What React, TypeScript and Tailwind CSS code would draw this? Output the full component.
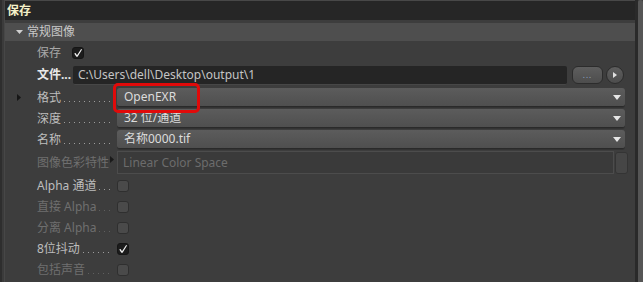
import React from 'react';

const font = { fontFamily: '"Noto Sans", "Noto Sans CJK SC", sans-serif' };

const DownArrow = () => (
  <svg width="8" height="5" viewBox="0 0 8 5" className="shrink-0">
    <path d="M0 0 H8 L4 5 Z" fill="#e6e6e6" />
  </svg>
);

const Checkbox = ({ checked }: { checked?: boolean }) => (
  <div
    className={
      'w-[12px] h-[12px] rounded-[3px] flex items-center justify-center shrink-0 ' +
      (checked
        ? 'bg-[#1c1c1c] border border-[#151515]'
        : 'bg-[#4a4a4a] border border-[#2f2f2f]')
    }
  >
    {checked && (
      <svg width="10" height="10" viewBox="0 0 10 10">
        <path d="M1.2 5.6 L3.4 8.8 L4.6 8.8 L9.2 1.2 L8 1.2 L4 7.2 L2.6 5 Z" fill="#f2f2f2" />
      </svg>
    )}
  </div>
);

const Label = ({ text, dim }: { text: string; dim?: boolean }) => (
  <div className="w-[75px] mr-[5px] flex items-center whitespace-nowrap">
    <span className={'text-[12px] leading-none ' + (dim ? 'text-[#6f6f6f]' : 'text-[#bdbdbd]')}>{text}</span>
    <div
      className={
        'flex-1 ml-[3px] mt-[8px] h-[1px] bg-repeat-x bg-[length:5px_1px] ' +
        (dim
          ? 'bg-[linear-gradient(to_right,#5f5f5f_1px,transparent_1px)]'
          : 'bg-[linear-gradient(to_right,#9c9c9c_1px,transparent_1px)]')
      }
    />
  </div>
);

const Dropdown = ({ value }: { value: string }) => (
  <div className="w-[508px] h-[19px] rounded-[3px] bg-gradient-to-b from-[#5c5c5c] to-[#4f4f4f] border-b border-[#2a2a2a] shadow-[0_1px_0_#333] flex items-center pl-[7px] pr-[4px]">
    <span className="flex-1 text-[12px] text-[#dcdcdc] leading-none">{value}</span>
    <DownArrow />
  </div>
);

const Row = ({ h, children, arrow }: { h: string; children: React.ReactNode; arrow?: boolean }) => (
  <div className={'flex items-center ' + h}>
    <div className="w-[32px] shrink-0 flex items-center">
      {arrow && (
        <svg width="4" height="7" viewBox="0 0 4 7" className="ml-[12px]">
          <path d="M0 0 L4 3.5 L0 7 Z" fill="#161616" />
        </svg>
      )}
    </div>
    {children}
  </div>
);

export default function App() {
  return (
    <div className="w-[643px] h-[282px] bg-[#3d3d3d] flex overflow-hidden relative" style={font}>
      <div className="w-[5px] border-l-[2px] border-[#2e2e2e] border-r border-r-[#474747] bg-[#3b3b3b]" />
      <div className="flex-1 flex flex-col">
        <div className="h-[20px] bg-[#262626] border-t border-[#484848] flex items-center pl-[2px]">
          <span className="text-[12px] font-bold text-[#f4f0c8] leading-none">保存</span>
        </div>
        <div className="h-[3px]" />
        <div className="h-[18px] bg-[#4e4e4e] flex items-center">
          <svg width="7" height="4" viewBox="0 0 7 4" className="ml-[11px] mr-[4px]">
            <path d="M0 0 H7 L3.5 4 Z" fill="#cfcfcf" />
          </svg>
          <span className="text-[12px] text-[#c8c8c8] leading-none">常规图像</span>
        </div>
        <div className="h-[1px]" />

        <Row h="h-[21px]">
          <span className="w-[35px] text-[12px] text-[#a8a8a8] leading-none">保存</span>
          <Checkbox checked />
        </Row>

        <Row h="h-[24px]">
          <span className="w-[36px] text-[12px] font-bold text-[#e8e8e8] leading-none whitespace-nowrap">文件...</span>
          <div className="w-[494px] h-[19px] bg-[#252525] rounded-[2px] border-b border-[#474747] flex items-center pl-[5px]">
            <span className="text-[12px] text-[#c4c4c4] leading-none">C:\Users\dell\Desktop\output\1</span>
          </div>
          <div className="ml-[5px] w-[31px] h-[18px] rounded-[6px] bg-gradient-to-b from-[#5e5e5e] to-[#4d4d4d] border border-[#2c2c2c] flex items-end justify-center pb-[4px]">
            <span className="text-[8px] text-[#8fa9c9] leading-none tracking-[1px]">...</span>
          </div>
          <div className="ml-[3px] w-[18px] h-[18px] rounded-full bg-gradient-to-b from-[#5e5e5e] to-[#4d4d4d] border border-[#2c2c2c] flex items-center justify-center">
            <svg width="4" height="6" viewBox="0 0 4 6">
              <path d="M0 0 L4 3 L0 6 Z" fill="#e0e0e0" />
            </svg>
          </div>
        </Row>

        <Row h="h-[21px]" arrow>
          <Label text="格式" />
          <Dropdown value="OpenEXR" />
        </Row>
        <Row h="h-[21px]">
          <Label text="深度" />
          <Dropdown value="32 位/通道" />
        </Row>
        <Row h="h-[21px]">
          <Label text="名称" />
          <Dropdown value="名称0000.tif" />
        </Row>

        <Row h="h-[25px]">
          <div className="w-[73px] text-[12px] text-[#6f6f6f] leading-none whitespace-nowrap">图像色彩特性</div>
          <svg width="4" height="7" viewBox="0 0 4 7" className="mr-[3px] -mt-[6px]">
            <path d="M0 0 L4 3.5 L0 7 Z" fill="#1a1a1a" />
          </svg>
          <div className="w-[497px] h-[23px] bg-[#3a3a3a] border border-[#4c4c4c] flex items-center pl-[5px]">
            <span className="text-[12px] text-[#6c6c6c] leading-none">Linear Color Space</span>
          </div>
          <div className="ml-[1px] w-[13px] h-[22px] rounded-[3px] bg-[#464646] border border-[#343434]" />
        </Row>

        <Row h="h-[21px]">
          <Label text="Alpha 通道" />
          <Checkbox />
        </Row>
        <Row h="h-[21px]">
          <Label text="直接 Alpha" dim />
          <Checkbox />
        </Row>
        <Row h="h-[21px]">
          <Label text="分离 Alpha" dim />
          <Checkbox />
        </Row>
        <Row h="h-[21px]">
          <Label text="8位抖动" />
          <Checkbox checked />
        </Row>
        <Row h="h-[21px]">
          <Label text="包括声音" dim />
          <Checkbox />
        </Row>
      </div>
      <div className="w-[3px] bg-[#2a2a2a]" />
      <div className="w-[5px] bg-[#565656] rounded-t-[3px]" />

      <div className="absolute left-[113px] top-[83px] w-[87px] h-[30px] border-[3px] border-[#e10a0a] rounded-[5px]" />
    </div>
  );
}
